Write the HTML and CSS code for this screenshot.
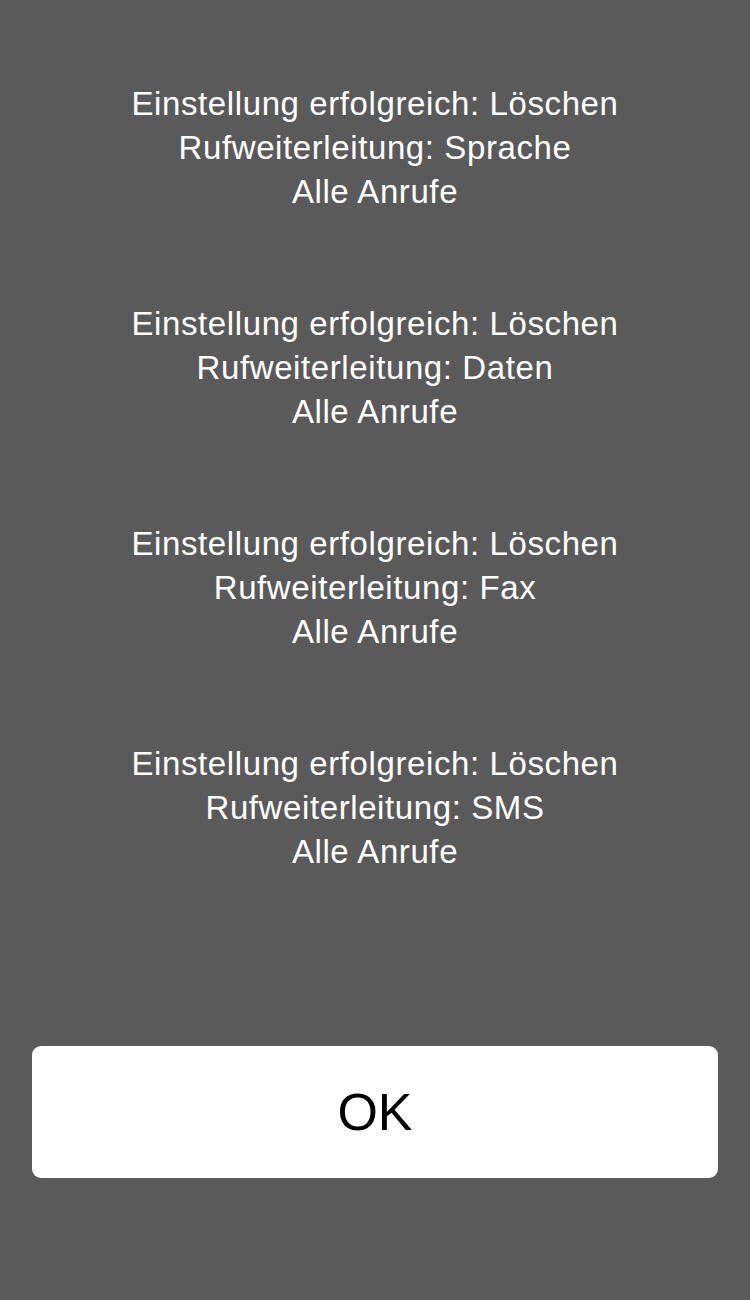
FILE: index.html
```html
<!DOCTYPE html>
<html lang="de">
<head>
    <meta charset="UTF-8">
    <meta name="viewport" content="width=device-width, initial-scale=1.0">
    <title>Rufweiterleitung</title>
    <link rel="stylesheet" href="styles.css">
</head>
<body>
    <div class="screen">
        <div class="messages">
            <div class="message">
                <div>Einstellung erfolgreich: Löschen</div>
                <div>Rufweiterleitung: Sprache</div>
                <div>Alle Anrufe</div>
            </div>
            <div class="message">
                <div>Einstellung erfolgreich: Löschen</div>
                <div>Rufweiterleitung: Daten</div>
                <div>Alle Anrufe</div>
            </div>
            <div class="message">
                <div>Einstellung erfolgreich: Löschen</div>
                <div>Rufweiterleitung: Fax</div>
                <div>Alle Anrufe</div>
            </div>
            <div class="message">
                <div>Einstellung erfolgreich: Löschen</div>
                <div>Rufweiterleitung: SMS</div>
                <div>Alle Anrufe</div>
            </div>
        </div>

        <button class="ok-button" type="button">OK</button>
    </div>
</body>
</html>
```

FILE: styles.css
```css
html, body {
    margin: 0;
    padding: 0;
    background-color: #5a5a5a;
}
body {
    font-family: "Liberation Sans", Arial, sans-serif;
}
.screen {
    width: 750px;
    height: 1300px;
    box-sizing: border-box;
    padding: 82px 32px 0 32px;
    display: flex;
    flex-direction: column;
}
.messages {
    display: flex;
    flex-direction: column;
    gap: 88px;
}
.message {
    color: #ffffff;
    text-align: center;
    font-size: 33px;
    letter-spacing: 0.6px;
    line-height: 44px;
}
.ok-button {
    margin-top: 172px;
    height: 132px;
    width: 100%;
    background-color: #ffffff;
    border: none;
    border-radius: 9px;
    color: #000000;
    font-family: "Liberation Sans", Arial, sans-serif;
    font-size: 52px;
    cursor: pointer;
}
```
